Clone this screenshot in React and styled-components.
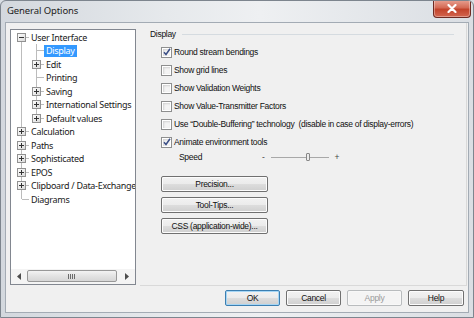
import React from "react";
import styled, { createGlobalStyle } from "styled-components";

const UI = `"Liberation Sans", Arial, sans-serif`;
const SEGOE = `"Noto Sans", "Open Sans", sans-serif`;

const Global = createGlobalStyle`
  html, body { margin: 0; padding: 0; background: #d9dee4; }
  body { font-family: ${UI}; }
  * { box-sizing: border-box; }
`;

const Window = styled.div`
  width: 474px;
  height: 318px;
  border: 1px solid #7d858e;
  border-radius: 6px 6px 0 0;
  background: linear-gradient(to right, #d3d8de 0%, #e6e9ec 35%, #eef0f2 55%, #dadee3 100%);
  display: flex;
  flex-direction: column;
  overflow: hidden;
`;

const TitleBar = styled.div`
  height: 21px;
  display: flex;
  align-items: flex-start;
  justify-content: space-between;
  padding-left: 6px;
  padding-right: 2px;
`;

const Title = styled.div`
  font-family: ${SEGOE};
  font-size: 9.5px;
  line-height: 20px;
  color: #1b1b1b;
  letter-spacing: -0.1px;
`;

const CloseBtn = styled.div`
  width: 38px;
  height: 18px;
  margin-top: -1px;
  border: 1px solid #6e2a22;
  border-top: none;
  border-radius: 0 0 4px 4px;
  background: linear-gradient(#e8a293 0%, #d46a55 45%, #c2432b 55%, #d3664f 100%);
  box-shadow: inset 0 0 0 1px rgba(255, 255, 255, 0.35);
  display: flex;
  align-items: center;
  justify-content: center;
`;

const Client = styled.div`
  margin: 0 4px 4px 4px;
  flex: 1;
  border: 1px solid #a3abb4;
  background: #f0f0f0;
  display: flex;
  flex-direction: column;
`;

const Main = styled.div`
  height: 263px;
  display: flex;
  padding: 0 1px 0 4px;
`;

const Tree = styled.div`
  width: 126px;
  height: 256px;
  margin-top: 6px;
  border: 1px solid #828790;
  background: #fff;
  display: flex;
  flex-direction: column;
`;

const TreeList = styled.div`
  flex: 1;
  padding: 0 0 0 3px;
  font-family: ${SEGOE};
  font-size: 9px;
  letter-spacing: -0.3px;
  color: #000;
  overflow: hidden;
`;

const TreeRow = styled.div`
  height: 13.5px;
  display: flex;
  align-items: stretch;
  white-space: nowrap;
`;

const Cell = styled.div`
  position: relative;
  width: 15px;
  flex: none;
  &::before {
    content: "";
    position: absolute;
    left: 7px;
    width: 0;
    border-left: 1px solid #bcbcbc;
    top: ${(p) => (p.$v === "bottom" ? "50%" : "0")};
    bottom: ${(p) => (p.$v === "top" ? "50%" : "0")};
    display: ${(p) => (p.$v ? "block" : "none")};
  }
  &::after {
    content: "";
    position: absolute;
    left: 8px;
    right: 0;
    top: 50%;
    border-top: 1px solid #bcbcbc;
    display: ${(p) => (p.$h ? "block" : "none")};
  }
`;

const Expander = styled.svg`
  position: absolute;
  left: 3px;
  top: 50%;
  margin-top: -4px;
  z-index: 1;
`;

const Label = styled.span`
  display: flex;
  align-items: center;
  padding: 0 2px;
  height: 12px;
  margin-top: 1px;
  background: ${(p) => (p.$sel ? "#3399ff" : "transparent")};
  color: ${(p) => (p.$sel ? "#fff" : "#1a1a1a")};
`;

const HScroll = styled.div`
  height: 15px;
  padding: 1px 2px 2px 2px;
  display: flex;
  align-items: center;
  background: #f4f4f4;
`;

const Arrow = styled.div`
  width: 12px;
  height: 12px;
  display: flex;
  align-items: center;
  justify-content: center;
  flex: none;
`;

const Thumb = styled.div`
  width: 90px;
  height: 12px;
  margin: 0 1px 0 2px;
  border: 1px solid #989898;
  border-radius: 2px;
  background: linear-gradient(to bottom, #f3f3f3, #e3e3e3 50%, #d6d6d6);
  display: flex;
  align-items: center;
  justify-content: center;
`;

const Track = styled.div`
  flex: 1;
`;

const Page = styled.div`
  flex: 1;
  margin-left: 4px;
  border-right: 1px solid #d9d9d9;
  border-bottom: 1px solid #d9d9d9;
  padding: 5px 12px 0 10px;
  font-family: ${UI};
  font-size: 8.5px;
  letter-spacing: -0.3px;
  color: #111;
`;

const GroupHead = styled.div`
  display: flex;
  align-items: center;
  height: 12px;
  gap: 6px;
  &::after {
    content: "";
    flex: 1;
    border-top: 1px solid #d5dbe0;
  }
`;

const Options = styled.div`
  margin-top: 3px;
  padding-left: 11px;
  display: flex;
  flex-direction: column;
`;

const CheckRow = styled.label`
  height: 18px;
  display: flex;
  align-items: center;
  gap: 2px;
  white-space: pre;
`;

const Box = styled.span`
  width: 11px;
  height: 11px;
  flex: none;
  border: 1px solid #8e8f8f;
  background: #f4f4f4;
  box-shadow: inset 0 0 0 1px #fff, inset 1px 1px 2px 1px #d2d2d2;
  display: flex;
  align-items: center;
  justify-content: center;
`;

const SpeedRow = styled.div`
  height: 12px;
  display: flex;
  align-items: center;
  padding-left: 18px;
`;

const SpeedLabel = styled.span`
  width: 83px;
`;

const Slider = styled.div`
  display: flex;
  align-items: center;
  gap: 6px;
  color: #444;
`;

const Rail = styled.div`
  position: relative;
  width: 58px;
  height: 1px;
  background: #a8a8a8;
`;

const Knob = styled.span`
  position: absolute;
  left: 35px;
  top: -4px;
  width: 4px;
  height: 8px;
  border: 1px solid #888;
  border-radius: 1px;
  background: #ececec;
`;

const BtnStack = styled.div`
  margin-top: 13px;
  display: flex;
  flex-direction: column;
  gap: 5px;
`;

const Button = styled.button`
  width: ${(p) => p.$w || 107}px;
  height: 16px;
  padding: 0;
  font-family: ${UI};
  font-size: 8.5px;
  letter-spacing: -0.3px;
  color: ${(p) => (p.$disabled ? "#9a9a9a" : "#111")};
  border: 1px solid ${(p) => (p.$default ? "#3c7fb1" : p.$disabled ? "#b9bcbe" : "#707070")};
  border-radius: 2px;
  background: ${(p) =>
    p.$disabled
      ? "#f4f4f4"
      : "linear-gradient(to bottom, #f2f2f2 0%, #ebebeb 50%, #dddddd 51%, #cfcfcf 100%)"};
  box-shadow: inset 0 0 0 1px ${(p) => (p.$default ? "#a6d6f5" : p.$disabled ? "#f8f8f8" : "#fcfcfc")};
`;

const Footer = styled.div`
  flex: 1;
  display: flex;
  justify-content: flex-end;
  align-items: flex-start;
  gap: 6px;
  padding: 4px 4px 0 0;
`;

function Exp({ open }) {
  return (
    <Expander width="9" height="9" viewBox="0 0 9 9">
      <defs>
        <linearGradient id="eg" x1="0" y1="0" x2="1" y2="1">
          <stop offset="0" stopColor="#ffffff" />
          <stop offset="1" stopColor="#d8d8d8" />
        </linearGradient>
      </defs>
      <rect x="0.5" y="0.5" width="8" height="8" fill="url(#eg)" stroke="#919191" />
      <line x1="2" y1="4.5" x2="7" y2="4.5" stroke="#333" />
      {!open && <line x1="4.5" y1="2" x2="4.5" y2="7" stroke="#333" />}
    </Expander>
  );
}

const tree = [
  { t: "User Interface", cells: [{ v: "bottom", h: true, e: "minus" }] },
  { t: "Display", sel: true, cells: [{ v: "full" }, { v: "full", h: true }] },
  { t: "Edit", cells: [{ v: "full" }, { v: "full", h: true, e: "plus" }] },
  { t: "Printing", cells: [{ v: "full" }, { v: "full", h: true }] },
  { t: "Saving", cells: [{ v: "full" }, { v: "full", h: true, e: "plus" }] },
  { t: "International Settings", cells: [{ v: "full" }, { v: "full", h: true, e: "plus" }] },
  { t: "Default values", cells: [{ v: "full" }, { v: "top", h: true, e: "plus" }] },
  { t: "Calculation", cells: [{ v: "full", h: true, e: "plus" }] },
  { t: "Paths", cells: [{ v: "full", h: true, e: "plus" }] },
  { t: "Sophisticated", cells: [{ v: "full", h: true, e: "plus" }] },
  { t: "EPOS", cells: [{ v: "full", h: true, e: "plus" }] },
  { t: "Clipboard / Data-Exchange", cells: [{ v: "full", h: true, e: "plus" }] },
  { t: "Diagrams", cells: [{ v: "top", h: true }] },
];

const options = [
  { t: "Round stream bendings", c: true },
  { t: "Show grid lines" },
  { t: "Show Validation Weights" },
  { t: "Show Value-Transmitter Factors" },
  { t: "Use \u201cDouble-Buffering\u201d technology  (disable in case of display-errors)" },
  { t: "Animate environment tools", c: true },
];

function Check({ checked }) {
  return (
    <Box>
      {checked && (
        <svg width="8" height="8" viewBox="0 0 8 8">
          <path d="M1 4.2 L3 6.5 L7 0.8" fill="none" stroke="#3b4f86" strokeWidth="1.5" />
        </svg>
      )}
    </Box>
  );
}

export default function App() {
  return (
    <>
      <Global />
      <Window>
        <TitleBar>
          <Title>General Options</Title>
          <CloseBtn>
            <svg width="10" height="9" viewBox="0 0 10 9">
              <path d="M1.5 1 L8.5 8 M8.5 1 L1.5 8" stroke="#fff" strokeWidth="2.2" strokeLinecap="round" />
            </svg>
          </CloseBtn>
        </TitleBar>
        <Client>
          <Main>
            <Tree>
              <TreeList>
                {tree.map((r) => (
                  <TreeRow key={r.t}>
                    {r.cells.map((c, i) => (
                      <Cell key={i} $v={c.v} $h={c.h}>
                        {c.e && <Exp open={c.e === "minus"} />}
                      </Cell>
                    ))}
                    <Label $sel={r.sel}>{r.t}</Label>
                  </TreeRow>
                ))}
              </TreeList>
              <HScroll>
                <Arrow>
                  <svg width="4" height="7" viewBox="0 0 4 7">
                    <path d="M4 0 L0 3.5 L4 7 Z" fill="#4d4d4d" />
                  </svg>
                </Arrow>
                <Thumb>
                  <svg width="8" height="5" viewBox="0 0 8 5">
                    <path d="M0.5 0 V5 M2.5 0 V5 M4.5 0 V5 M6.5 0 V5" stroke="#6b6b6b" strokeWidth="1" />
                  </svg>
                </Thumb>
                <Track />
                <Arrow>
                  <svg width="4" height="7" viewBox="0 0 4 7">
                    <path d="M0 0 L4 3.5 L0 7 Z" fill="#4d4d4d" />
                  </svg>
                </Arrow>
              </HScroll>
            </Tree>
            <Page>
              <GroupHead>Display</GroupHead>
              <Options>
                {options.map((o) => (
                  <CheckRow key={o.t}>
                    <Check checked={o.c} />
                    {o.t}
                  </CheckRow>
                ))}
                <SpeedRow>
                  <SpeedLabel>Speed</SpeedLabel>
                  <Slider>
                    <span>-</span>
                    <Rail>
                      <Knob />
                    </Rail>
                    <span>+</span>
                  </Slider>
                </SpeedRow>
                <BtnStack>
                  <Button>Precision...</Button>
                  <Button>Tool-Tips...</Button>
                  <Button>CSS (application-wide)...</Button>
                </BtnStack>
              </Options>
            </Page>
          </Main>
          <Footer>
            <Button $w={55} $default>OK</Button>
            <Button $w={55}>Cancel</Button>
            <Button $w={55} $disabled>Apply</Button>
            <Button $w={56}>Help</Button>
          </Footer>
        </Client>
      </Window>
    </>
  );
}
